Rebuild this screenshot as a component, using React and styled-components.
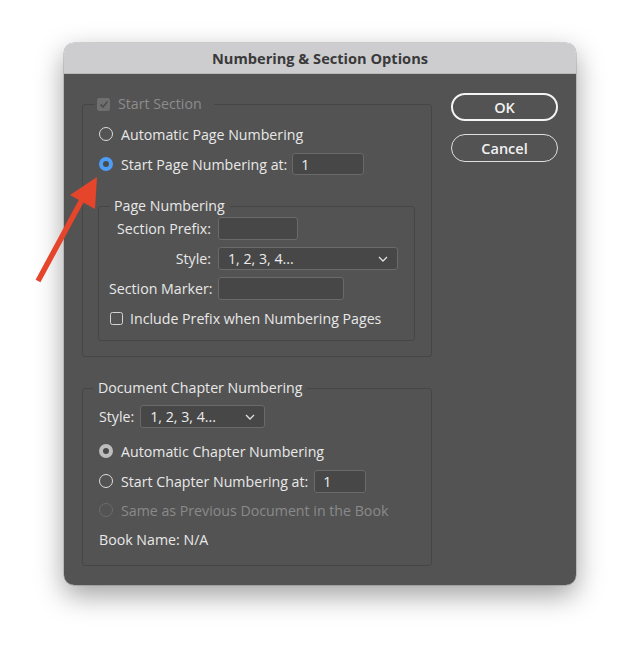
import React from "react";
import styled, { createGlobalStyle } from "styled-components";

const Global = createGlobalStyle`
  html, body { margin: 0; padding: 0; background: #ffffff; }
  body { font-family: "Open Sans", "Liberation Sans", sans-serif; }
  * { box-sizing: border-box; }
`;

const Page = styled.div`
  position: relative;
  width: 640px;
  height: 670px;
  padding: 43px 64px 0 64px;
  background: #ffffff;
`;

const Window = styled.div`
  width: 512px;
  height: 542px;
  border-radius: 10px;
  overflow: hidden;
  box-shadow: 0 10px 28px rgba(0, 0, 0, 0.38), 0 0 0 0.5px rgba(0, 0, 0, 0.25);
  display: flex;
  flex-direction: column;
`;

const TitleBar = styled.div`
  height: 31px;
  background: #cdcdcf;
  color: #3a3a3a;
  font-weight: 700;
  font-size: 14.6px;
  display: flex;
  align-items: center;
  justify-content: center;
  border-bottom: 1px solid #b8b8ba;
`;

const Body = styled.div`
  flex: 1;
  background: #535353;
  display: flex;
  padding: 21px 18px 0 18px;
  color: #e8e8e8;
  font-size: 14.2px;
`;

const LeftCol = styled.div`
  width: 350px;
  display: flex;
  flex-direction: column;
`;

const RightCol = styled.div`
  margin-left: 19px;
  margin-top: -2px;
  width: 107px;
  display: flex;
  flex-direction: column;
  gap: 13px;
`;

const Button = styled.button`
  height: 28px;
  width: 107px;
  border-radius: 14px;
  background: transparent;
  border: ${(p) => (p.$default ? "2px solid #f4f4f4" : "1px solid #dedede")};
  color: #f2f2f2;
  font-family: inherit;
  font-size: 14.5px;
  font-weight: 600;
  padding: 0;
`;

const Group = styled.fieldset`
  margin: ${(p) => p.$margin || "0"};
  padding: ${(p) => p.$padding || "0 16px"};
  border: 1px solid #464646;
  border-radius: 3px;
  min-width: 0;
  display: flex;
  flex-direction: column;
`;

const Legend = styled.legend`
  height: 18px;
  line-height: 18px;
  padding: ${(p) => p.$pad || "0 4px"};
  margin-left: ${(p) => p.$ml || "0"};
  color: ${(p) => (p.$disabled ? "#8c8c8c" : "#e8e8e8")};
  display: flex;
  align-items: center;
  gap: 8px;
`;

const Row = styled.div`
  height: ${(p) => p.$h || 24}px;
  margin-top: ${(p) => p.$mt || 0}px;
  display: flex;
  align-items: center;
  gap: ${(p) => p.$gap || 8}px;
  color: ${(p) => (p.$disabled ? "#8a8a8a" : "#e8e8e8")};
  white-space: nowrap;
`;

const Radio = styled.span`
  width: 14px;
  height: 14px;
  border-radius: 50%;
  flex: none;
  display: inline-block;
  ${(p) =>
    p.$state === "blue"
      ? "border: 4px solid #4d9df5; background: #4a4a4a;"
      : p.$state === "gray"
      ? "border: 4.5px solid #bdbdbd; background: #4a4a4a;"
      : p.$state === "disabled"
      ? "border: 1px solid #6c6c6c;"
      : "border: 1.5px solid #dcdcdc;"}
`;

const Check = styled.span`
  width: 13px;
  height: 13px;
  border-radius: 2.5px;
  flex: none;
  display: inline-flex;
  align-items: center;
  justify-content: center;
  ${(p) =>
    p.$disabled
      ? "background: #6f6f6f; border: none;"
      : "border: 1px solid #d4d4d4;"}
`;

const Field = styled.div`
  width: ${(p) => p.$w}px;
  height: ${(p) => p.$h || 23}px;
  margin-left: ${(p) => p.$ml || 0}px;
  background: #474747;
  border: 1px solid #6a6a6a;
  border-radius: 3px;
  display: flex;
  align-items: center;
  padding: 0 8px;
  color: #ececec;
  font-size: 14.2px;
  flex: none;
`;

const SelectBox = styled(Field)`
  justify-content: space-between;
  padding: 0 9px 0 9px;
`;

const Grid = styled.div`
  display: grid;
  grid-template-columns: 102px auto;
  column-gap: 7px;
  row-gap: 7px;
  align-items: center;
  margin-top: 2px;
`;

const Label = styled.span`
  text-align: right;
  white-space: nowrap;
`;

const Span2 = styled.div`
  grid-column: 1 / span 2;
  height: 23px;
  display: flex;
  align-items: center;
  gap: 7px;
  padding-left: 1px;
  white-space: nowrap;
`;

const Arrow = styled.svg`
  position: absolute;
  left: 0;
  top: 0;
  pointer-events: none;
`;

const Chevron = () => (
  <svg width="10" height="6" viewBox="0 0 10 6">
    <path d="M1 1 L5 5 L9 1" fill="none" stroke="#e0e0e0" strokeWidth="1.3" />
  </svg>
);

const CheckMark = () => (
  <svg width="10" height="9" viewBox="0 0 10 9">
    <path d="M1.5 4.5 L4 7 L8.5 1.5" fill="none" stroke="#4f4f4f" strokeWidth="1.8" />
  </svg>
);

export default function App() {
  return (
    <>
      <Global />
      <Page>
        <Window>
          <TitleBar>Numbering &amp; Section Options</TitleBar>
          <Body>
            <LeftCol>
              <Group $padding="0 16px 15px 16px">
                <Legend $disabled $pad="0 12px 0 2px" $ml="-4px">
                  <Check $disabled>
                    <CheckMark />
                  </Check>
                  Start Section
                </Legend>
                <Row $mt={9}>
                  <Radio />
                  Automatic Page Numbering
                </Row>
                <Row $mt={6}>
                  <Radio $state="blue" />
                  Start Page Numbering at:
                  <Field $w={72} $h={22} $ml={-3}>1</Field>
                </Row>
                <Group $margin="21px 0 0 -1px" $padding="0 16px 10px 10px">
                  <Legend $pad="0 5px 0 4px" $ml="1px">
                    Page Numbering
                  </Legend>
                  <Grid>
                    <Label>Section Prefix:</Label>
                    <Field $w={80} />
                    <Label>Style:</Label>
                    <SelectBox $w={180}>
                      1, 2, 3, 4...
                      <Chevron />
                    </SelectBox>
                    <Label>Section Marker:</Label>
                    <Field $w={126} />
                    <Span2>
                      <Check />
                      Include Prefix when Numbering Pages
                    </Span2>
                  </Grid>
                </Group>
              </Group>

              <Group $margin="22px 0 0 0" $padding="0 16px 14px 16px">
                <Legend $pad="0 4px 0 5px" $ml="-6px">
                  Document Chapter Numbering
                </Legend>
                <Row $h={23} $mt={8} $gap={7}>
                  Style:
                  <SelectBox $w={125} $ml={-1}>
                    1, 2, 3, 4...
                    <Chevron />
                  </SelectBox>
                </Row>
                <Row $mt={11}>
                  <Radio $state="gray" />
                  Automatic Chapter Numbering
                </Row>
                <Row $mt={6}>
                  <Radio />
                  Start Chapter Numbering at:
                  <Field $w={52} $h={23} $ml={-2}>1</Field>
                </Row>
                <Row $mt={5} $disabled>
                  <Radio $state="disabled" />
                  Same as Previous Document in the Book
                </Row>
                <Row $mt={5}>Book Name: N/A</Row>
              </Group>
            </LeftCol>
            <RightCol>
              <Button $default>OK</Button>
              <Button>Cancel</Button>
            </RightCol>
          </Body>
        </Window>
        <Arrow width="640" height="670" viewBox="0 0 640 670">
          <line x1="38" y1="281" x2="84" y2="196" stroke="#e5452b" strokeWidth="5.5" />
          <polygon points="97,177 70,195 95,209" fill="#e5452b" />
        </Arrow>
      </Page>
    </>
  );
}
